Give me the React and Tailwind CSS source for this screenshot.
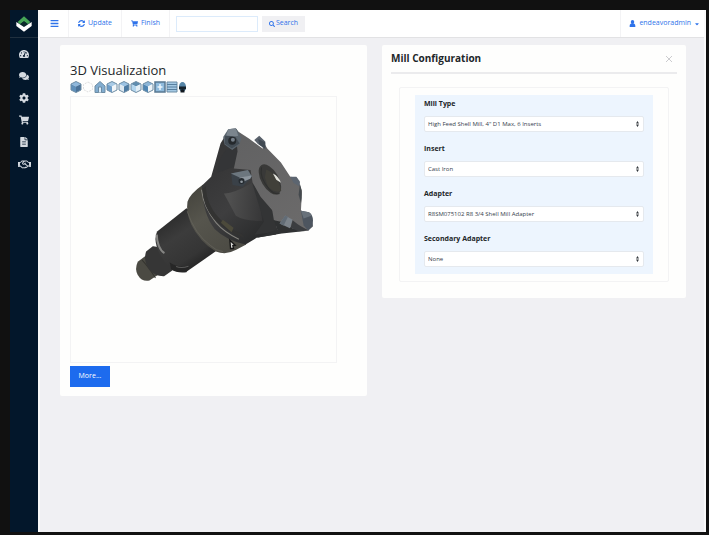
import React, { useState } from 'react';
import {
  FaBars,
  FaCog,
  FaComments,
  FaFileAlt,
  FaRegHandshake,
  FaSearch,
  FaShoppingCart,
  FaSyncAlt,
  FaTachometerAlt,
  FaCaretDown,
} from 'react-icons/fa';

const navItems = [
  { label: 'Dashboard', icon: FaTachometerAlt },
  { label: 'Messages', icon: FaComments },
  { label: 'Settings', icon: FaCog },
  { label: 'Cart', icon: FaShoppingCart },
  { label: 'Documents', icon: FaFileAlt },
  { label: 'Partners', icon: FaRegHandshake },
];

const fields = [
  { id: 'mill-type', label: 'Mill Type', value: 'High Feed Shell Mill, 4" D1 Max, 6 Inserts' },
  { id: 'insert', label: 'Insert', value: 'Cast Iron' },
  { id: 'adapter', label: 'Adapter', value: 'R8SM075102 R8 3/4 Shell Mill Adapter' },
  { id: 'secondary-adapter', label: 'Secondary Adapter', value: 'None' },
];

// top, left and right face colours of each view cube
const cubes = {
  iso: ['#8fb8dc', '#5f8fb9', '#4a7298'],
  bottom: ['#a9cbe6', '#6f9fca', '#f1f5f8'],
  right: ['#9cc3e4', '#dfe9f1', '#4d7ba3'],
  top: ['#5f8daf', '#b4d6ee', '#e3eef5'],
  left: ['#8db6d8', '#4f86b4', '#eef4f8'],
};

function Logo() {
  return (
    <svg viewBox="0 0 48 48" className="size-4" aria-hidden="true">
      <path d="M24 1 43 18 36 25 24 16 12 25 5 18Z" fill="#46a556" />
      <path d="M12 25 24 16 36 25 24 32Z" fill="#0c2b2b" />
      <path d="M1 18 24 33 47 18V30L24 47 1 30Z" fill="#ffffff" />
    </svg>
  );
}

function UserIcon() {
  return (
    <svg viewBox="0 0 24 24" className="size-[7px]" fill="currentColor" aria-hidden="true">
      <ellipse cx="12" cy="7" rx="6" ry="7" />
      <path d="M7 12H17Q22 15 22 21Q22 24 19 24H5Q2 24 2 21Q2 15 7 12Z" />
    </svg>
  );
}

function Cube({ faces }) {
  return (
    <svg viewBox="0 0 24 24" className="size-3" aria-hidden="true">
      <path d="M12 1 22 6 12 11 2 6Z" fill={faces[0]} />
      <path d="M2 6 12 11V23L2 18Z" fill={faces[1]} />
      <path d="M22 6 12 11V23L22 18Z" fill={faces[2]} />
      <path d="M12 1 22 6V18L12 23 2 18V6Z" fill="none" stroke="#6d8ca4" strokeWidth="2" />
    </svg>
  );
}

function ViewTools() {
  return (
    <div className="flex h-3">
      <button type="button" aria-label="Shaded"><Cube faces={cubes.iso} /></button>
      <button type="button" aria-label="Wireframe">
        <svg viewBox="0 0 24 24" className="size-3" fill="none" stroke="#dededf" strokeWidth="2">
          <path d="M12 2 21 7V17L12 22 3 17V7Z" strokeDasharray="4 2" />
        </svg>
      </button>
      <button type="button" aria-label="Home">
        <svg viewBox="0 0 24 24" className="size-3">
          <path d="M12 1 22 10V23H2V10Z" fill="#82add0" stroke="#6d8ca4" strokeWidth="2" />
          <path d="M9 23V12H15V23" fill="#dcebf6" stroke="#6d8ca4" strokeWidth="2" />
        </svg>
      </button>
      <button type="button" aria-label="Bottom view"><Cube faces={cubes.bottom} /></button>
      <button type="button" aria-label="Right view"><Cube faces={cubes.right} /></button>
      <button type="button" aria-label="Top view"><Cube faces={cubes.top} /></button>
      <button type="button" aria-label="Left view"><Cube faces={cubes.left} /></button>
      <button type="button" aria-label="Fit to window">
        <svg viewBox="0 0 24 24" className="size-3">
          <path d="M2 2H22V22H2Z" fill="#8fbbdd" stroke="#587891" strokeWidth="3" />
          <path d="M12 6V18M7 12H17" stroke="#edf6fc" strokeWidth="3" />
        </svg>
      </button>
      <button type="button" aria-label="Sections">
        <svg viewBox="0 0 24 24" className="size-3">
          <path d="M2 2H22V22H2Z" fill="#a4c9e4" stroke="#6d8ca4" strokeWidth="2" />
          <path d="M2 7H22M2 12H22M2 17H22" stroke="#587f9e" strokeWidth="2" />
        </svg>
      </button>
      <button type="button" aria-label="Material">
        <svg viewBox="0 0 24 24" className="size-3">
          <ellipse cx="9" cy="12" rx="7" ry="10" fill="#5584a6" />
          <path d="M2 11H16V16Q9 20 2 16Z" fill="#17232c" />
          <path d="M5 18H13V23H5Z" fill="#111820" />
        </svg>
      </button>
    </div>
  );
}

function MillModel() {
  return (
    <svg viewBox="-145 -51 794 794" className="block w-full" role="img" aria-label="Shell mill and adapter">
      <defs>
        <linearGradient id="shank" gradientUnits="userSpaceOnUse" x1="130" y1="320" x2="230" y2="470">
          <stop offset="0" stopColor="#2c2c2c" />
          <stop offset="0.35" stopColor="#3c3c3c" />
          <stop offset="0.75" stopColor="#353535" />
          <stop offset="1" stopColor="#222222" />
        </linearGradient>
        <linearGradient id="collar" gradientUnits="userSpaceOnUse" x1="210" y1="240" x2="330" y2="410">
          <stop offset="0" stopColor="#47463f" />
          <stop offset="0.4" stopColor="#56554d" />
          <stop offset="1" stopColor="#4c4b44" />
        </linearGradient>
        <linearGradient id="body" gradientUnits="userSpaceOnUse" x1="270" y1="180" x2="420" y2="360">
          <stop offset="0" stopColor="#363637" />
          <stop offset="0.5" stopColor="#3e3e3f" />
          <stop offset="1" stopColor="#2b2c2d" />
        </linearGradient>
        <linearGradient id="pocket" gradientUnits="userSpaceOnUse" x1="330" y1="260" x2="430" y2="270">
          <stop offset="0" stopColor="#4f4f4f" />
          <stop offset="1" stopColor="#373738" />
        </linearGradient>
        <linearGradient id="face" gradientUnits="userSpaceOnUse" x1="370" y1="80" x2="530" y2="330">
          <stop offset="0" stopColor="#626263" />
          <stop offset="1" stopColor="#6b6a6a" />
        </linearGradient>
      </defs>

      {/* shank */}
      <path d="M55 443Q45 465 55 482Q68 504 90 499L122 478 84 421Z" fill="#4b4a43" />
      <path d="M68 438Q87 458 108 491" fill="none" stroke="#34342f" strokeWidth="3" />
      <path d="M80 412 100 396Q118 395 142 418L169 461 134 486Q107 487 89 466Q71 439 80 412Z" fill="#363636" />
      <path d="M113 352 201 282Q239 303 263 342L295 407 203 471Q182 477 162 468Q137 449 121 419Q100 379 113 352Z" fill="url(#shank)" />
      <path d="M112 361C112 386 121 409 135 417" fill="none" stroke="#858583" strokeWidth="6" />
      <path d="M151 445Q174 462 210 455L201 474Q173 478 155 465Z" fill="#262626" />
      <path d="M170 457Q186 463 207 456" fill="none" stroke="#5a5a59" strokeWidth="3" />

      {/* collar */}
      <path d="M204 263Q211 239 251 211L355 360 380 391 350 407Q320 424 289 412Q240 382 215 330Q199 295 204 263Z" fill="url(#collar)" />
      <path d="M203 291Q226 360 273 394Q289 410 310 412" fill="none" stroke="#66655d" strokeWidth="2" />

      {/* cutter body */}
      <path d="M247 215 275 188 303 88Q324 47 351 45L430 190 470 361 411 371 378 391Q320 378 286 345Q250 302 247 215Z" fill="url(#body)" />
      <path d="M246 227Q252 280 290 326Q314 354 358 375" fill="none" stroke="#85847e" strokeWidth="3" />
      <path d="M259 216Q260 275 305 318Q329 342 364 358L375 371Q314 350 282 313Q250 276 249 225Z" fill="#333332" />
      <path d="M304 326 336 354 342 341 310 317Z" fill="#4c4a3b" />
      <path d="M294 176Q297 131 320 107L356 103 345 157Z" fill="#343537" />
      <path d="M313 238Q340 240 397 207L418 246 428 320Q375 322 349 305Q334 276 313 238Z" fill="url(#pocket)" />
      <path d="M398 207 464 294 474 352 405 362 433 322Z" fill="#333435" />

      {/* front face */}
      <path d="M343 44 388 73 430 104 424 70 443 103 484 145 512 188 532 190 547 230 544 289 572 302 580 337 564 350 511 338 481 326 463 318 458 288 423 248 399 205 393 168 343 163 354 112 350 72Z" fill="url(#face)" />
      <path d="M463 318 484 323 519 342 564 350 536 353 487 358 463 362 411 371 473 345Z" fill="#2f3132" />
      <path d="M497 304 519 317 511 342 480 328Z" fill="#7b838b" />
      <path d="M497 304 505 308 492 335 480 328Z" fill="#626c76" />
      <path d="M519 318Q544 339 568 348L537 351 513 341Z" fill="#3b3d40" />
      <path d="M544 290 568 294Q579 300 580 318L579 335 566 350 552 334Z" fill="#4d555f" />
      <path d="M544 290 568 294 577 304 552 313Z" fill="#68717a" />
      <path d="M512 188 530 188 541 202 540 217 522 207Z" fill="#5c6570" />
      <path d="M541 210Q550 237 544 267L537 242Z" fill="#44494d" />

      {/* bore */}
      <ellipse cx="451" cy="196" rx="26" ry="50" transform="rotate(-30 451 196)" fill="#393938" />
      <path d="M440 166Q476 181 485 230Q468 239 445 218L436 190Z" fill="#41403a" />
      <path d="M460 178Q477 186 484 206L470 197Z" fill="#e3e3dd" />
      <path d="M426 160Q419 191 449 225Q466 243 480 238" fill="none" stroke="#2f302f" strokeWidth="3" />

      {/* inserts */}
      <path d="M311 69 326 46 349 43 356 53 365 72 360 91 338 108 315 91Z" fill="#5b656e" />
      <path d="M317 65 346 65 360 88 337 103 316 89Z" fill="#434c54" />
      <path d="M326 46 349 43 356 65 346 67 320 64Z" fill="#7b858e" />
      <circle cx="338" cy="80" r="12" fill="#25292d" />
      <circle cx="340" cy="77" r="6" fill="#77808a" />
      <path d="M404 78 419 65 437 82 437 105 415 90Z" fill="#59616b" />
      <path d="M416 75 437 85 437 105 419 91Z" fill="#414a53" />
      <path d="M335 179 386 168 397 188 369 218 339 213Z" fill="#3a4148" />
      <path d="M334 178 385 168 397 187 360 190Z" fill="#6c767e" />
      <path d="M360 190 397 184 392 194 362 207Z" fill="#8c959d" />
      <circle cx="366" cy="201" r="9" fill="#252b30" />
      <circle cx="366" cy="203" r="4" fill="#929aa1" />

      {/* cursor over the drive screw */}
      <path d="M331 378 347 393 340 394 342 403 333 403Z" fill="#d9d9d6" stroke="#171717" strokeWidth="4" />
    </svg>
  );
}

function Sidebar() {
  return (
    <aside className="w-7 shrink-0 bg-[#03172b]">
      <a href="#home" aria-label="Home" className="flex h-7 items-center justify-center border-b border-[#20303f]">
        <Logo />
      </a>
      <nav className="flex flex-col pt-[5px]">
        {navItems.map(({ label, icon: Icon }) => (
          <a
            key={label}
            href={`#${label.toLowerCase()}`}
            aria-label={label}
            className="flex h-[22px] items-center justify-center text-[#d5dae0]"
          >
            <Icon size={label === 'Partners' ? 13 : 10} />
          </a>
        ))}
      </nav>
    </aside>
  );
}

function Header() {
  return (
    <header className="flex h-7 items-stretch border-b border-[#e2e2e4] bg-white text-[7px] text-[#2f73ea]">
      <button type="button" aria-label="Toggle menu" className="flex w-7 items-center justify-center">
        <FaBars size={9} />
      </button>
      <button type="button" className="flex w-[53px] items-center justify-center gap-[3px] border-l border-[#f3f3f5]">
        <FaSyncAlt size={7} />
        Update
      </button>
      <button type="button" className="flex w-[49px] items-center justify-center gap-[3px] border-x border-[#f3f3f5]">
        <FaShoppingCart size={7} />
        Finish
      </button>
      <form className="ml-1.5 flex items-center gap-1" onSubmit={(e) => e.preventDefault()}>
        <input
          type="search"
          aria-label="Search"
          className="h-4 w-[82px] border border-[#dcebfb] bg-white px-1 outline-none"
        />
        <button type="submit" className="flex h-4 w-[43px] items-center justify-center gap-px bg-[#f0f0f3]">
          <FaSearch size={6} />
          Search
        </button>
      </form>
      <button type="button" className="ml-auto flex items-center gap-[3px] border-l border-[#f3f3f5] pr-1 pl-2">
        <UserIcon />
        endeavoradmin
        <FaCaretDown size={6} />
      </button>
    </header>
  );
}

function Field({ id, label, value }) {
  return (
    <div>
      <label htmlFor={id} className="block text-[7px] leading-4 font-bold text-[#222629]">
        {label}
      </label>
      <div className="relative mt-1">
        <select
          id={id}
          className="block h-4 w-full appearance-none rounded-xs border border-[#e5e9ee] bg-white px-[3px] text-[6px] text-[#35404b]"
        >
          <option>{value}</option>
        </select>
        <svg viewBox="0 0 6 12" className="pointer-events-none absolute top-[5px] right-[5px] h-1.5 w-[3px]" aria-hidden="true">
          <path d="M3 0 6 5H0ZM3 12 0 7H6Z" fill="#33383d" />
        </svg>
      </div>
    </div>
  );
}

function App() {
  const [open, setOpen] = useState(true);

  return (
    <div className="flex min-h-screen bg-[#111111] pt-[10px] pr-[3px] pb-[3px] pl-[10px] font-['Open_Sans',sans-serif]">
      <Sidebar />
      <div className="flex min-w-0 flex-1 flex-col border-x-2 border-[#fafafa] bg-[#f0f0f3]">
        <Header />
        <main className="grid grid-cols-[307fr_304fr] items-start gap-[15px] pt-[7px] pr-[18px] pb-2 pl-5">
          <section className="rounded-xs bg-[#fefefd] px-[10px] pt-[17px] pb-[9px]">
            <h1 className="text-[13px] leading-4 text-[#222629]">3D Visualization</h1>
            <div className="pt-[3px]">
              <ViewTools />
            </div>
            <div className="mt-[3px] mr-5 border border-[#f3f3f4]">
              <MillModel />
            </div>
            <button type="button" className="mt-[3px] block h-[21px] w-10 bg-[#1d6bee] text-[7px] text-white">
              More...
            </button>
          </section>

          {open && (
            <section className="rounded-xs bg-[#fefefd] px-[9px] pb-4">
              <div className="flex h-[29px] items-center justify-between border-b-2 border-[#ebebed]">
                <h2 className="text-[10px] font-bold text-[#222629]">Mill Configuration</h2>
                <button type="button" aria-label="Close" onClick={() => setOpen(false)} className="pr-1">
                  <svg viewBox="0 0 8 8" className="size-2" stroke="#cccccf" strokeWidth="1">
                    <path d="M1 1 7 7M7 1 1 7" />
                  </svg>
                </button>
              </div>
              <form className="mx-2 mt-[13px] rounded-xs border border-[#f3f3f4] px-[15px] py-[7px]">
                <div className="flex flex-col gap-[9px] bg-[#edf5fe] px-[9px] pt-px pb-[7px]">
                  {fields.map((field) => (
                    <Field key={field.id} {...field} />
                  ))}
                </div>
              </form>
            </section>
          )}
        </main>
      </div>
    </div>
  );
}

export default App;
